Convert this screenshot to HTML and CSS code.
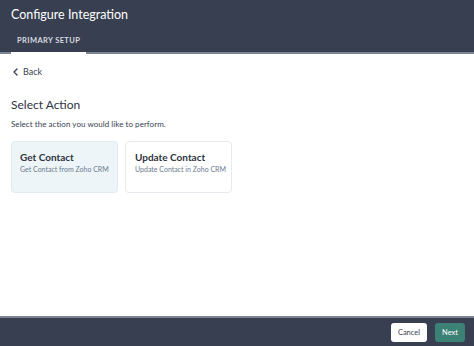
FILE: index.html
```html
<!DOCTYPE html>
<html>
<head>
<meta charset="utf-8">
<link rel="stylesheet" href="styles.css">
</head>
<body>
<div class="app">
  <header class="header">
    <div class="title">Configure Integration</div>
    <nav class="tabs"><div class="tab active">PRIMARY SETUP</div></nav>
  </header>
  <main class="main">
    <div class="back">
      <svg width="7" height="8" viewBox="0 0 7 8"><path d="M5 1 L2 4 L5 7" fill="none" stroke="#374151" stroke-width="1.4" stroke-linecap="round" stroke-linejoin="round"/></svg>
      <span>Back</span>
    </div>
    <h2 class="heading">Select Action</h2>
    <p class="sub">Select the action you would like to perform.</p>
    <div class="cards">
      <div class="card selected">
        <div class="card-title">Get Contact</div>
        <div class="card-desc">Get Contact from Zoho CRM</div>
      </div>
      <div class="card">
        <div class="card-title">Update Contact</div>
        <div class="card-desc">Update Contact in Zoho CRM</div>
      </div>
    </div>
  </main>
  <footer class="footer">
    <button class="btn cancel">Cancel</button>
    <button class="btn next">Next</button>
  </footer>
</div>
</body>
</html>
```
FILE: styles.css
```css
* { box-sizing: border-box; }
html, body { margin: 0; padding: 0; }
body { font-family: Lato, "Noto Sans", sans-serif; background: #fff; }
.app { display: flex; flex-direction: column; width: 474px; height: 346px; }
.header { background: #373f50; border-bottom: 2px solid #7c8594; height: 54px; display: flex; flex-direction: column; padding: 0 0 0 11px; }
.title { color: #fff; font-size: 12.5px; margin-top: 7px; line-height: 15px; }
.tabs { display: flex; margin-top: auto; }
.tab { color: #d7dbe2; font-size: 7.5px; font-weight: bold; letter-spacing: 0.4px; padding: 0 6px 7px 6px; border-bottom: 2px solid transparent; margin-bottom: -2px; }
.tab.active { border-bottom-color: #fff; }
.main { flex: 1; padding: 12px 11px 0 11px; }
.back { display: flex; align-items: center; gap: 4px; font-size: 9px; color: #374151; padding-left: 1px; }
.heading { font-weight: normal; font-size: 12px; color: #2d3340; margin: 20px 0 0 0; line-height: 15px; }
.sub { font-size: 8px; color: #374151; margin: 7px 0 0 0; letter-spacing: 0.05px; }
.cards { display: flex; gap: 7px; margin-top: 12px; }
.card { width: 107px; height: 52px; border: 1px solid #e6e9ee; border-radius: 4px; padding: 9px 4px 9px 8px; background: #fff; }
.card + .card { padding-left: 9px; }
.card.selected { background: #eef5f8; border-color: #e2ebf0; }
.card-title { font-weight: bold; font-size: 10px; color: #2d3340; line-height: 12px; white-space: nowrap; }
.card-desc { font-size: 7px; color: #6b7a90; margin-top: 2px; white-space: nowrap; }
.footer { background: #373f50; border-top: 2px solid #7c8594; height: 30px; display: flex; justify-content: flex-end; align-items: center; gap: 8px; padding: 0 9px 0 0; }
.btn { font-family: Lato, sans-serif; font-size: 7.5px; border: none; border-radius: 3px; height: 19px; padding: 0 7px; }
.cancel { background: #fff; color: #374151; }
.next { background: #3b8175; color: #fff; }
```
